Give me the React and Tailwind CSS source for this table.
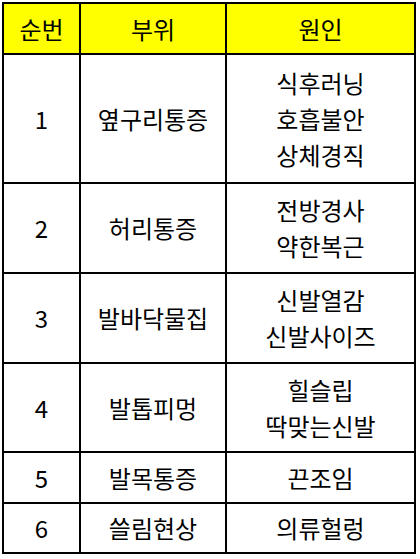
import React from "react";

const ROWS = [
  { no: "1", part: "옆구리통증", causes: ["식후러닝", "호흡불안", "상체경직"], h: "h-[127px]" },
  { no: "2", part: "허리통증", causes: ["전방경사", "약한복근"], h: "h-[88px]" },
  { no: "3", part: "발바닥물집", causes: ["신발열감", "신발사이즈"], h: "h-[88px]" },
  { no: "4", part: "발톱피멍", causes: ["힐슬립", "딱맞는신발"], h: "h-[87px]" },
  { no: "5", part: "발목통증", causes: ["끈조임"], h: "h-[49px]" },
  { no: "6", part: "쓸림현상", causes: ["의류헐렁"], h: "h-[48px]" },
];

const Cell = ({ className = "", children }) => (
  <div className={"flex flex-col items-center justify-center " + className}>{children}</div>
);

export default function App() {
  return (
    <div
      className="w-[420px] h-[559px] bg-white pt-[2px] pl-[2px] text-black"
      style={{ fontFamily: '"Noto Sans CJK KR", "Noto Sans", sans-serif' }}
    >
      <div className="grid grid-cols-[75px_144px_187px] gap-[2px] bg-black p-[2px] w-[414px] text-[24px] leading-[36px]">
        <Cell className="bg-[#ffff00] h-[49px]">순번</Cell>
        <Cell className="bg-[#ffff00] h-[49px]">부위</Cell>
        <Cell className="bg-[#ffff00] h-[49px]">원인</Cell>
        {ROWS.map((r) => (
          <React.Fragment key={r.no}>
            <Cell className={"bg-white " + r.h}>{r.no}</Cell>
            <Cell className={"bg-white " + r.h}>{r.part}</Cell>
            <Cell className={"bg-white " + r.h}>
              {r.causes.map((c) => (
                <span key={c}>{c}</span>
              ))}
            </Cell>
          </React.Fragment>
        ))}
      </div>
    </div>
  );
}
